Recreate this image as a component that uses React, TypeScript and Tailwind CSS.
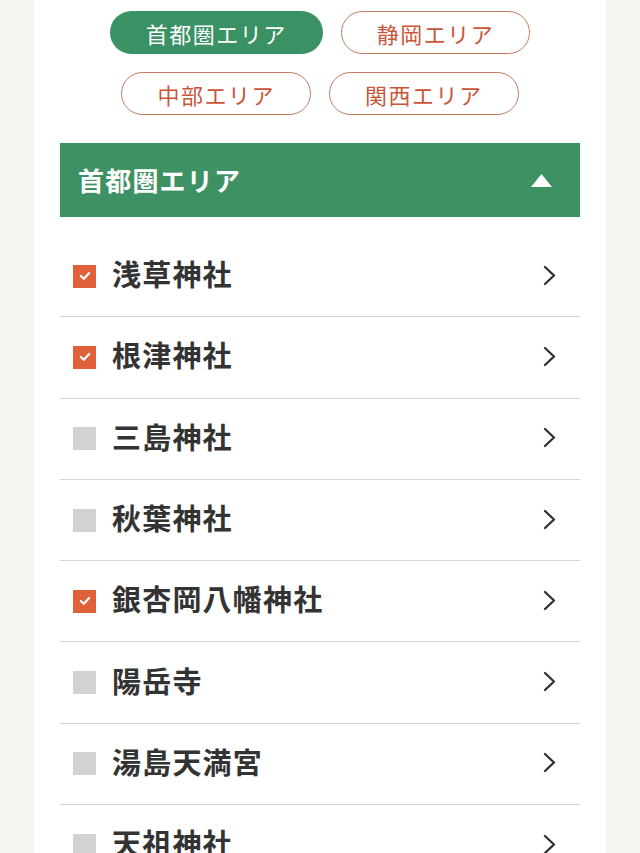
import React from "react";

const areas = [
  ["首都圏エリア", true],
  ["静岡エリア", false],
  ["中部エリア", false],
  ["関西エリア", false],
] as const;

const items: [string, boolean][] = [
  ["浅草神社", true],
  ["根津神社", true],
  ["三島神社", false],
  ["秋葉神社", false],
  ["銀杏岡八幡神社", true],
  ["陽岳寺", false],
  ["湯島天満宮", false],
  ["天祖神社", false],
];

export default function App() {
  return (
    <div
      className="min-h-[853px] w-[640px] bg-[#f6f4f1] flex justify-center"
      style={{ fontFamily: '"Noto Sans CJK JP", "Noto Sans", sans-serif' }}
    >
      <div className="w-[572px] bg-white flex flex-col items-center h-[853px] overflow-hidden">
        <div className="flex flex-wrap justify-center gap-x-[18px] gap-y-[18px] w-[440px] pt-[11px]">
          {areas.map(([label, active]) => (
            <div
              key={label}
              className={
                active
                  ? "h-[43px] px-[36px] rounded-full bg-[#3a9164] text-white text-[22px] tracking-[1.5px] flex items-center justify-center leading-none"
                  : "h-[43px] px-[35px] rounded-full border border-[#c27b62] text-[#c8573a] text-[22px] tracking-[1.5px] flex items-center justify-center leading-none"
              }
            >
              {label}
            </div>
          ))}
        </div>
        <div className="w-[520px] mt-[28px]">
          <div className="h-[74px] bg-[#3d9163] flex items-center justify-between pl-[18px] pr-[28px]">
            <span className="text-white text-[26px] font-bold tracking-[1.2px] pb-[2px]">首都圏エリア</span>
            <svg width="21" height="13" viewBox="0 0 21 13">
              <polygon points="10.5,0 21,13 0,13" fill="#ffffff" />
            </svg>
          </div>
          <div className="pt-[19px]">
            {items.map(([name, checked]) => (
              <div
                key={name}
                className="h-[81.3px] border-b border-[#d4d4d4] flex items-center pl-[13px] pr-[24px]"
              >
                <div
                  className={
                    checked
                      ? "w-[23px] h-[23px] bg-[#e0603a] flex items-center justify-center"
                      : "w-[23px] h-[23px] bg-[#d2d2d2]"
                  }
                >
                  {checked && (
                    <svg width="12" height="10" viewBox="0 0 12 10">
                      <polyline points="1.8,5 4.8,7.8 10.2,2" fill="none" stroke="#fff" strokeWidth="2.2" strokeLinecap="round" strokeLinejoin="round" />
                    </svg>
                  )}
                </div>
                <span className="ml-[16px] pb-[5px] text-[29px] font-bold text-[#333333] tracking-[1.2px] flex-1 leading-none">
                  {name}
                </span>
                <svg width="13" height="21" viewBox="0 0 13 21" className="mb-[2px]">
                  <polyline points="2,2 11,10.5 2,19" fill="none" stroke="#333" strokeWidth="2.4" strokeLinecap="round" strokeLinejoin="round" />
                </svg>
              </div>
            ))}
          </div>
        </div>
      </div>
    </div>
  );
}
